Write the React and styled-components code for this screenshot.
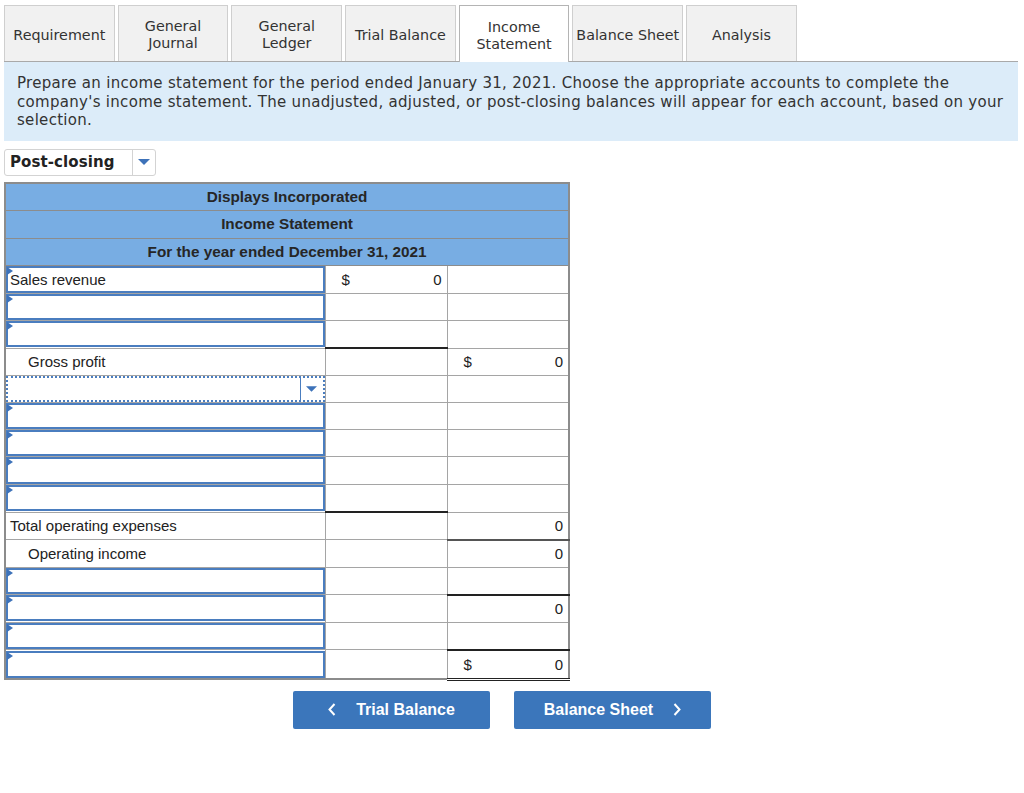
import React from "react";
import styled, { createGlobalStyle } from "styled-components";

const GlobalStyle = createGlobalStyle`
  html, body {
    margin: 0;
    padding: 0;
    background: #ffffff;
  }
  body {
    font-family: "DejaVu Sans", Verdana, sans-serif;
    color: #333333;
  }
`;

const tabs = [
  { label: "Requirement" },
  { label: "General\nJournal" },
  { label: "General\nLedger" },
  { label: "Trial Balance" },
  { label: "Income\nStatement", active: true },
  { label: "Balance Sheet" },
  { label: "Analysis" },
];

const promptLines = [
  "Prepare an income statement for the period ended January 31, 2021. Choose the appropriate accounts to complete the",
  "company's income statement. The unadjusted, adjusted, or post-closing balances will appear for each account, based on your",
  "selection.",
];

// each body row of the statement
const rows = [
  { type: "input", text: "Sales revenue", c2: { dollar: true, value: "0" } },
  { type: "input" },
  { type: "input", c2: { line: "single" } },
  { type: "label", text: "Gross profit", indent: true, c3: { dollar: true, value: "0" } },
  { type: "select" },
  { type: "input" },
  { type: "input" },
  { type: "input" },
  { type: "input", c2: { line: "single" } },
  { type: "label", text: "Total operating expenses", c3: { value: "0", line: "thick" } },
  { type: "label", text: "Operating income", indent: true, c3: { value: "0" } },
  { type: "input", c3: { line: "single" } },
  { type: "input", c3: { value: "0" } },
  { type: "input", c3: { line: "single" } },
  { type: "input", c3: { dollar: true, value: "0", line: "double" } },
];

const Page = styled.div`
  padding: 5px 6px 0 4px;
`;

const TabBar = styled.div`
  display: flex;
  gap: 3px;
  border-bottom: 1px solid #a9a9a9;
  height: 56px;
`;

const Tab = styled.div`
  width: 110.7px;
  height: ${(p) => (p.$active ? "57px" : "56px")};
  box-sizing: border-box;
  padding-top: 3px;
  border: 1px solid ${(p) => (p.$active ? "#b4b4b4" : "#cfcfcf")};
  border-bottom: none;
  background: ${(p) => (p.$active ? "#ffffff" : "#f1f1f1")};
  display: flex;
  align-items: center;
  justify-content: center;
  text-align: center;
  white-space: pre-line;
  font-size: 14.3px;
  line-height: 17px;
  color: #333333;
  position: relative;
  z-index: ${(p) => (p.$active ? 1 : 0)};
`;

const Prompt = styled.div`
  background: #dcecf9;
  padding: 12px 10px 11px 13px;
  font-size: 15px;
  line-height: 18.5px;
  color: #333333;
  letter-spacing: 0.3px;
  white-space: nowrap;
`;

const BalanceSelect = styled.div`
  margin-top: 8px;
  width: 152px;
  height: 27px;
  box-sizing: border-box;
  border: 1px solid #d3d3d3;
  border-radius: 3px;
  display: flex;
  align-items: stretch;
  background: #fff;
`;

const SelectText = styled.div`
  width: 122px;
  border-right: 1px solid #d3d3d3;
  display: flex;
  align-items: center;
  padding-left: 5px;
  font-weight: bold;
  font-size: 15px;
  letter-spacing: 0.1px;
  color: #222;
`;

const SelectArrow = styled.div`
  flex: 1;
  display: flex;
  align-items: center;
  justify-content: center;
`;

const Statement = styled.table`
  margin-top: 6px;
  width: 564px;
  border-collapse: collapse;
  table-layout: fixed;
  font-family: "Liberation Sans", Arial, sans-serif;
  font-size: 15px;
  color: #222222;
  border: 2px solid #8c8c8c;
`;

const HeadCell = styled.td`
  background: #78ade3;
  border: 1px solid #8c8c8c;
  text-align: center;
  font-weight: bold;
  font-size: 15.3px;
  color: #262626;
  height: 26.5px;
  padding: 0;
`;

const lineStyles = {
  single: "2px solid #222222",
  thick: "2px solid #555555",
  double: "3px double #222222",
};

const Cell = styled.td`
  border: 1px solid #a5a5a5;
  ${(p) => (p.$line ? `border-bottom: ${lineStyles[p.$line]};` : "")}
  padding: 0;
  height: ${(p) => p.$h}px;
  vertical-align: middle;
`;

const LabelText = styled.div`
  padding-left: ${(p) => (p.$indent ? "22px" : "4px")};
  white-space: nowrap;
`;

const AccountInput = styled.div`
  position: relative;
  height: ${(p) => p.$h}px;
  box-sizing: border-box;
  border: 2px solid #4a7dbf;
  display: flex;
  align-items: center;
  padding-left: 2px;
  background: #fff;

  &::before {
    content: "";
    position: absolute;
    left: -1px;
    top: -1px;
    border-top: 4px solid transparent;
    border-bottom: 4px solid transparent;
    border-left: 6px solid #3d72b9;
  }
`;

const AccountSelect = styled.div`
  height: ${(p) => p.$h}px;
  box-sizing: border-box;
  border: 2px dotted #4a7dbf;
  display: flex;
`;

const SelectField = styled.div`
  flex: 1;
  border-right: 1px solid #4a7dbf;
`;

const SelectButton = styled.div`
  width: 22px;
  display: flex;
  align-items: center;
  justify-content: center;
`;

const Amount = styled.div`
  display: flex;
  justify-content: space-between;
  padding: 0 5px 0 16px;
`;

const ButtonRow = styled.div`
  display: flex;
  gap: 24px;
  margin-top: 10px;
  padding-left: 289px;
`;

const NavButton = styled.button`
  width: 197px;
  height: 38px;
  border: none;
  border-radius: 2px;
  background: #3b76bb;
  color: #ffffff;
  font-family: "Liberation Sans", Arial, sans-serif;
  font-weight: bold;
  font-size: 16px;
  display: flex;
  align-items: center;
  justify-content: center;
  gap: 20px;
  padding: 0;
  cursor: pointer;
`;

function DownArrow({ width = 12, height = 6 }) {
  return (
    <svg width={width} height={height} viewBox="0 0 12 6">
      <polygon points="0,0 12,0 6,6" fill="#3d72b9" />
    </svg>
  );
}

function Chevron({ dir }) {
  const pts = dir === "left" ? "6,1 1,6.5 6,12" : "1,1 6,6.5 1,12";
  return (
    <svg width="8" height="13" viewBox="0 0 7 13">
      <polyline points={pts} fill="none" stroke="#fff" strokeWidth="2" />
    </svg>
  );
}

function AmountCell({ data, h }) {
  if (!data) return <Cell $h={h} />;
  return (
    <Cell $h={h} $line={data.line}>
      {data.value !== undefined && (
        <Amount>
          <span>{data.dollar ? "$" : ""}</span>
          <span>{data.value}</span>
        </Amount>
      )}
    </Cell>
  );
}

function FirstCell({ row, h }) {
  if (row.type === "input") {
    return (
      <Cell $h={h}>
        <AccountInput $h={h}>{row.text}</AccountInput>
      </Cell>
    );
  }
  if (row.type === "select") {
    return (
      <Cell $h={h}>
        <AccountSelect $h={h}>
          <SelectField />
          <SelectButton>
            <DownArrow width={11} height={6} />
          </SelectButton>
        </AccountSelect>
      </Cell>
    );
  }
  return (
    <Cell $h={h}>
      <LabelText $indent={row.indent}>{row.text}</LabelText>
    </Cell>
  );
}

export default function App() {
  return (
    <Page>
      <GlobalStyle />
      <TabBar>
        {tabs.map((t) => (
          <Tab key={t.label} $active={t.active}>
            {t.label}
          </Tab>
        ))}
      </TabBar>
      <Prompt>
        {promptLines.map((line) => (
          <div key={line}>{line}</div>
        ))}
      </Prompt>
      <BalanceSelect>
        <SelectText>Post-closing</SelectText>
        <SelectArrow>
          <DownArrow />
        </SelectArrow>
      </BalanceSelect>
      <Statement>
        <colgroup>
          <col style={{ width: 320 }} />
          <col style={{ width: 122 }} />
          <col style={{ width: 122 }} />
        </colgroup>
        <thead>
          <tr>
            <HeadCell colSpan={3}>Displays Incorporated</HeadCell>
          </tr>
          <tr>
            <HeadCell colSpan={3}>Income Statement</HeadCell>
          </tr>
          <tr>
            <HeadCell colSpan={3}>For the year ended December 31, 2021</HeadCell>
          </tr>
        </thead>
        <tbody>
          {rows.map((row, i) => {
            // a few rows one pixel taller keep the body near a 27.5px pitch
            const h = i % 7 === 0 ? 27 : 26;
            return (
              <tr key={i}>
                <FirstCell row={row} h={h} />
                <AmountCell data={row.c2} h={h} />
                <AmountCell data={row.c3} h={h} />
              </tr>
            );
          })}
        </tbody>
      </Statement>
      <ButtonRow>
        <NavButton>
          <Chevron dir="left" />
          <span>Trial Balance</span>
        </NavButton>
        <NavButton>
          <span>Balance Sheet</span>
          <Chevron dir="right" />
        </NavButton>
      </ButtonRow>
    </Page>
  );
}
